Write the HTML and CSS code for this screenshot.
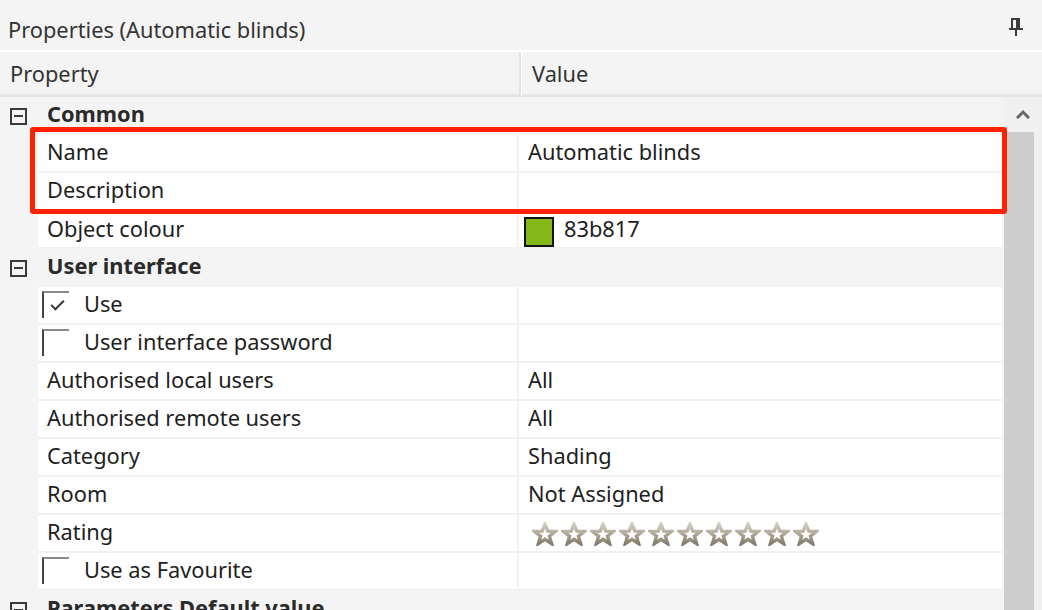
FILE: index.html
```html
<!DOCTYPE html>
<html lang="en">
<head>
    <meta charset="UTF-8">
    <title>Properties (Automatic blinds)</title>
    <link rel="stylesheet" href="styles.css">
</head>
<body>
    <div class="panel">
        <div class="titlebar">
            <span class="title">Properties (Automatic blinds)</span>
            <svg class="pin" width="16" height="18" viewBox="0 0 16 18">
                <path d="M4 1h7v10H4z M9 1h2v10H9z" fill="none" stroke="#3c3c3c" stroke-width="2"/>
                <rect x="1" y="10" width="14" height="2" fill="#3c3c3c"/>
                <rect x="7" y="12" width="2" height="6" fill="#3c3c3c"/>
            </svg>
        </div>
        <div class="header">
            <div class="hcell">Property</div>
            <div class="hcell value">Value</div>
        </div>
        <div class="body">
            <div class="grid">
                <div class="row group">
                    <span class="toggle"></span>
                    <span class="gname">Common</span>
                </div>
                <div class="row">
                    <div class="name">Name</div>
                    <div class="val">Automatic blinds</div>
                </div>
                <div class="row">
                    <div class="name">Description</div>
                    <div class="val"></div>
                </div>
                <div class="row">
                    <div class="name">Object colour</div>
                    <div class="val"><span class="swatch"></span>83b817</div>
                </div>
                <div class="row group">
                    <span class="toggle"></span>
                    <span class="gname">User interface</span>
                </div>
                <div class="row">
                    <div class="name check"><span class="box checked"></span>Use</div>
                    <div class="val"></div>
                </div>
                <div class="row">
                    <div class="name check"><span class="box"></span>User interface password</div>
                    <div class="val"></div>
                </div>
                <div class="row">
                    <div class="name">Authorised local users</div>
                    <div class="val">All</div>
                </div>
                <div class="row">
                    <div class="name">Authorised remote users</div>
                    <div class="val">All</div>
                </div>
                <div class="row">
                    <div class="name">Category</div>
                    <div class="val">Shading</div>
                </div>
                <div class="row">
                    <div class="name">Room</div>
                    <div class="val">Not Assigned</div>
                </div>
                <div class="row">
                    <div class="name">Rating</div>
                    <div class="val stars" id="stars"></div>
                </div>
                <div class="row">
                    <div class="name check"><span class="box"></span>Use as Favourite</div>
                    <div class="val"></div>
                </div>
                <div class="row group">
                    <span class="toggle"></span>
                    <span class="gname">Parameters Default value</span>
                </div>
            </div>
            <div class="scrollbar">
                <div class="arrow">
                    <svg width="14" height="10" viewBox="0 0 14 10">
                        <path d="M1 9 L7 3 L13 9" fill="none" stroke="#666" stroke-width="3"/>
                    </svg>
                </div>
                <div class="thumb"></div>
            </div>
        </div>
        <div class="highlight"></div>
    </div>

    <script>
        // ten empty rating stars
        const starSvg = '<svg class="star" width="26" height="24" viewBox="0 0 26 24">' +
            '<defs><linearGradient id="sg" x1="0" y1="0" x2="0" y2="1">' +
            '<stop offset="0" stop-color="#d6d0c2"/><stop offset="1" stop-color="#857d6c"/>' +
            '</linearGradient></defs>' +
            '<path d="M13 2 L15.8 9.2 L23.5 9.4 L17.4 14.2 L19.6 21.6 L13 17.3 L6.4 21.6 L8.6 14.2 L2.5 9.4 L10.2 9.2 Z" ' +
            'fill="#fff" stroke="url(#sg)" stroke-width="3.4" stroke-linejoin="miter"/></svg>';
        document.getElementById('stars').innerHTML = starSvg.repeat(10);
    </script>
</body>
</html>
```

FILE: styles.css
```css
body {
    margin: 0;
    background: #fff;
    font-family: 'Noto Sans', 'Open Sans', sans-serif;
    font-size: 21.8px;
    color: #1e1e1e;
    overflow: hidden;
}

.panel {
    position: relative;
    width: 1042px;
    height: 610px;
    overflow: hidden;
    background: #f4f4f4;
}

.titlebar {
    height: 48px;
    margin-top: 2px;
    padding: 0 0 0 8px;
    display: flex;
    align-items: center;
    justify-content: space-between;
    border-bottom: 2px solid #fff;
    color: #333;
}

.title {
    padding-top: 7px;
}

.pin {
    margin-right: 18px;
    margin-top: 2px;
}

.header {
    display: grid;
    grid-template-columns: 519px 1fr;
    height: 42px;
    border-bottom: 3px solid #e6e6e6;
    color: #333;
}

.hcell {
    padding-left: 10px;
    line-height: 44px;
}

.hcell.value {
    border-left: 2px solid #e4e4e4;
    box-shadow: inset 1px 0 0 #fff;
    padding-left: 11px;
}

.body {
    display: flex;
}

.grid {
    width: 1002px;
}

.row {
    height: 36px;
    display: grid;
    grid-template-columns: 479px 1fr;
    margin-left: 38px;
    border-bottom: 2px solid #f1f1f1;
    background: #fff;
}

.row.group {
    display: flex;
    align-items: center;
    margin-left: 0;
    background: #f4f4f4;
    border-bottom: 2px solid #f4f4f4;
    font-weight: bold;
}

.toggle {
    position: relative;
    width: 13px;
    height: 13px;
    border: 2px solid #3a3a3a;
    margin: 2px 20px 0 10px;
}

.toggle::after {
    content: '';
    position: absolute;
    left: 2px;
    right: 2px;
    top: 5px;
    height: 2px;
    background: #3a3a3a;
}

.gname {
    color: #2a2a2a;
    padding-bottom: 3px;
}

.name, .val {
    display: flex;
    align-items: center;
    padding-left: 9px;
    padding-bottom: 2px;
    line-height: 34px;
    white-space: nowrap;
}

.val {
    border-left: 2px solid #f1f1f1;
}

.name.check {
    padding-left: 4px;
}

.box {
    position: relative;
    width: 25px;
    height: 25px;
    border-top: 2px solid #8a8a8a;
    border-left: 2px solid #444;
    margin: 4px 15px 0 0;
    align-self: flex-start;
}

.box.checked::after {
    content: '';
    position: absolute;
    left: 7px;
    top: 7px;
    width: 11px;
    height: 5px;
    border-left: 2px solid #333;
    border-bottom: 2px solid #333;
    transform: rotate(-45deg);
}

.swatch {
    width: 26px;
    height: 26px;
    border: 2px solid #111;
    background: #83b817;
    margin: 6px 10px 0 -4px;
}

.stars {
    gap: 3px;
    padding-left: 13px;
}

.star {
    display: block;
    margin-top: 4px;
}

.scrollbar {
    width: 38px;
    margin-left: 2px;
    background: #f0f0f0;
    display: flex;
    flex-direction: column;
}

.arrow {
    height: 35px;
    display: flex;
    justify-content: center;
    padding-top: 12px;
    box-sizing: border-box;
}

.thumb {
    width: 30px;
    flex: 1;
    background: #cdcdcd;
}

.highlight {
    position: absolute;
    left: 30px;
    top: 127px;
    width: 967px;
    height: 77px;
    border: 5px solid #ff2200;
    border-radius: 3px;
}
```
